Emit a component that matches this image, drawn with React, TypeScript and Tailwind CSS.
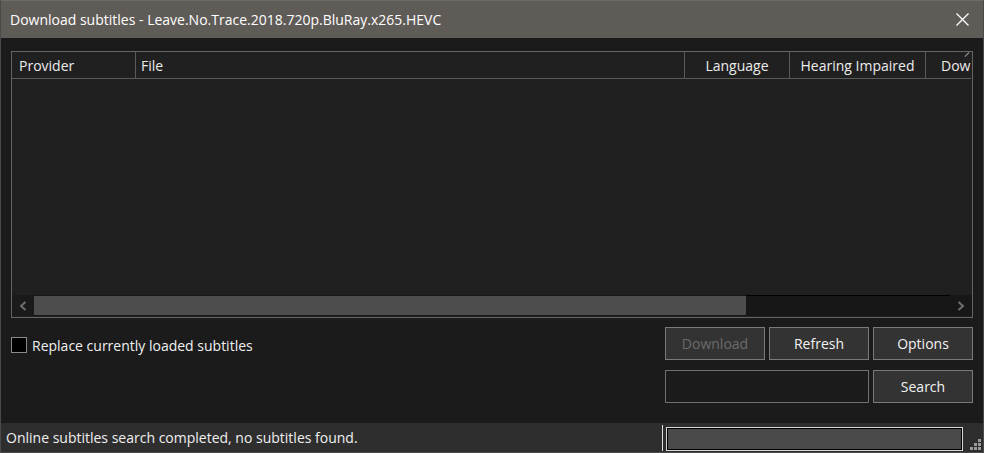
const FONT = { fontFamily: '"Open Sans", "Noto Sans", sans-serif' };

function Chevron({ dir }: { dir: "left" | "right" }) {
  return (
    <svg width="8" height="10" viewBox="0 0 8 10" fill="none">
      <path
        d={dir === "left" ? "M6.5 1 L2 5 L6.5 9" : "M1.5 1 L6 5 L1.5 9"}
        stroke="#6e6e6e"
        strokeWidth="2"
      />
    </svg>
  );
}

function Button({ label, disabled }: { label: string; disabled?: boolean }) {
  return (
    <button
      className={
        "h-[33px] w-[100px] border border-[#7a7a7a] bg-[#333333] text-[14px] " +
        (disabled ? "text-[#6b6b6b]" : "text-[#f2f2f2]")
      }
    >
      {label}
    </button>
  );
}

function ListView() {
  return (
    <div className="h-[267px] w-full border border-[#646464] bg-[#202020] flex flex-col relative">
      {/* header */}
      <div className="h-[27px] flex border-b border-[#5a5a5a] text-[14px] text-[#ececec] overflow-hidden mr-px">
        <div className="w-[124px] border-r border-[#5a5a5a] pl-[7px] pt-px flex items-center">Provider</div>
        <div className="w-[549px] border-r border-[#5a5a5a] pl-[5px] pt-px flex items-center">File</div>
        <div className="w-[105px] border-r border-[#5a5a5a] pt-px flex items-center justify-center">Language</div>
        <div className="w-[136px] border-r border-[#5a5a5a] pt-px flex items-center justify-center">Hearing Impaired</div>
        <div className="flex-1 pl-[15px] pt-px flex items-center whitespace-nowrap overflow-hidden">Dow</div>
      </div>
      <div className="absolute right-[2px] top-[2px] w-[6px] h-px bg-[#9a9a9a] rotate-[-45deg]" />
      {/* rows area */}
      <div className="flex-1" />
      {/* horizontal scrollbar */}
      <div className="h-[21px] mb-px flex bg-[#171717]">
        <div className="w-[22px] bg-[#1a1a1a] flex items-center justify-center">
          <Chevron dir="left" />
        </div>
        <div className="w-[712px] bg-[#4d4d4d] my-px" />
        <div className="flex-1 flex">
          <div className="flex-1 border-t border-black" />
          <div className="w-[22px] flex items-center justify-center">
            <Chevron dir="right" />
          </div>
        </div>
      </div>
    </div>
  );
}

export default function App() {
  return (
    <div
      className="w-[984px] h-[453px] flex flex-col bg-[#1b1b1b] border-x border-b border-[#4a4a4a] overflow-hidden"
      style={FONT}
    >
      {/* title bar */}
      <div className="h-[38px] shrink-0 bg-[#5f5b57] border-t border-[#6e6b68] flex items-center justify-between pl-[9px] pr-[14px]">
        <span className="text-[14px] text-white">Download subtitles - Leave.No.Trace.2018.720p.BluRay.x265.HEVC</span>
        <svg width="13" height="13" viewBox="0 0 13 13" fill="none">
          <path d="M0.5 0.5 L12.5 12.5 M12.5 0.5 L0.5 12.5" stroke="#ffffff" strokeWidth="1.3" />
        </svg>
      </div>

      {/* body */}
      <div className="flex-1 px-[10px] pt-[13px] flex flex-col">
        <ListView />
        <div className="mt-[9px] flex justify-between">
          <label className="flex items-start gap-[5px] pt-[10px] text-[14px] text-[#f0f0f0]">
            <span className="mt-[0px] w-[16px] h-[16px] border border-[#8a8a8a] bg-black" />
            <span className="leading-[18px]">Replace currently loaded subtitles</span>
          </label>
          <div className="grid grid-cols-[100px_100px_100px] gap-x-[4px] gap-y-[10px] w-[308px]">
            <Button label="Download" disabled />
            <Button label="Refresh" />
            <Button label="Options" />
            <div className="col-span-2 h-[33px] border border-[#6f6f6f] bg-[#1b1b1b]" />
            <Button label="Search" />
          </div>
        </div>
      </div>

      {/* status bar */}
      <div className="h-[29px] shrink-0 bg-[#2e2e2e] flex items-center">
        <span className="flex-1 pl-[5px] text-[14px] text-[#f0f0f0]">
          Online subtitles search completed, no subtitles found.
        </span>
        <div className="w-px h-[26px] bg-[#e0e0e0]" />
        <div className="ml-[3px] w-[297px] h-[24px] border border-[#d8d8d8] mt-[2px]">
          <div className="w-full h-full border border-black bg-[#4a4a4a]" />
        </div>
        <div className="w-[20px] h-full flex items-end justify-end pb-[1px] pr-[1px]">
          <svg width="12" height="12" viewBox="0 0 12 12">
            <rect x="8" y="0" width="3" height="3" fill="#9a9a9a" />
            <rect x="4" y="4" width="3" height="3" fill="#9a9a9a" />
            <rect x="8" y="4" width="3" height="3" fill="#9a9a9a" />
            <rect x="0" y="8" width="3" height="3" fill="#9a9a9a" />
            <rect x="4" y="8" width="3" height="3" fill="#9a9a9a" />
            <rect x="8" y="8" width="3" height="3" fill="#9a9a9a" />
          </svg>
        </div>
      </div>
    </div>
  );
}
